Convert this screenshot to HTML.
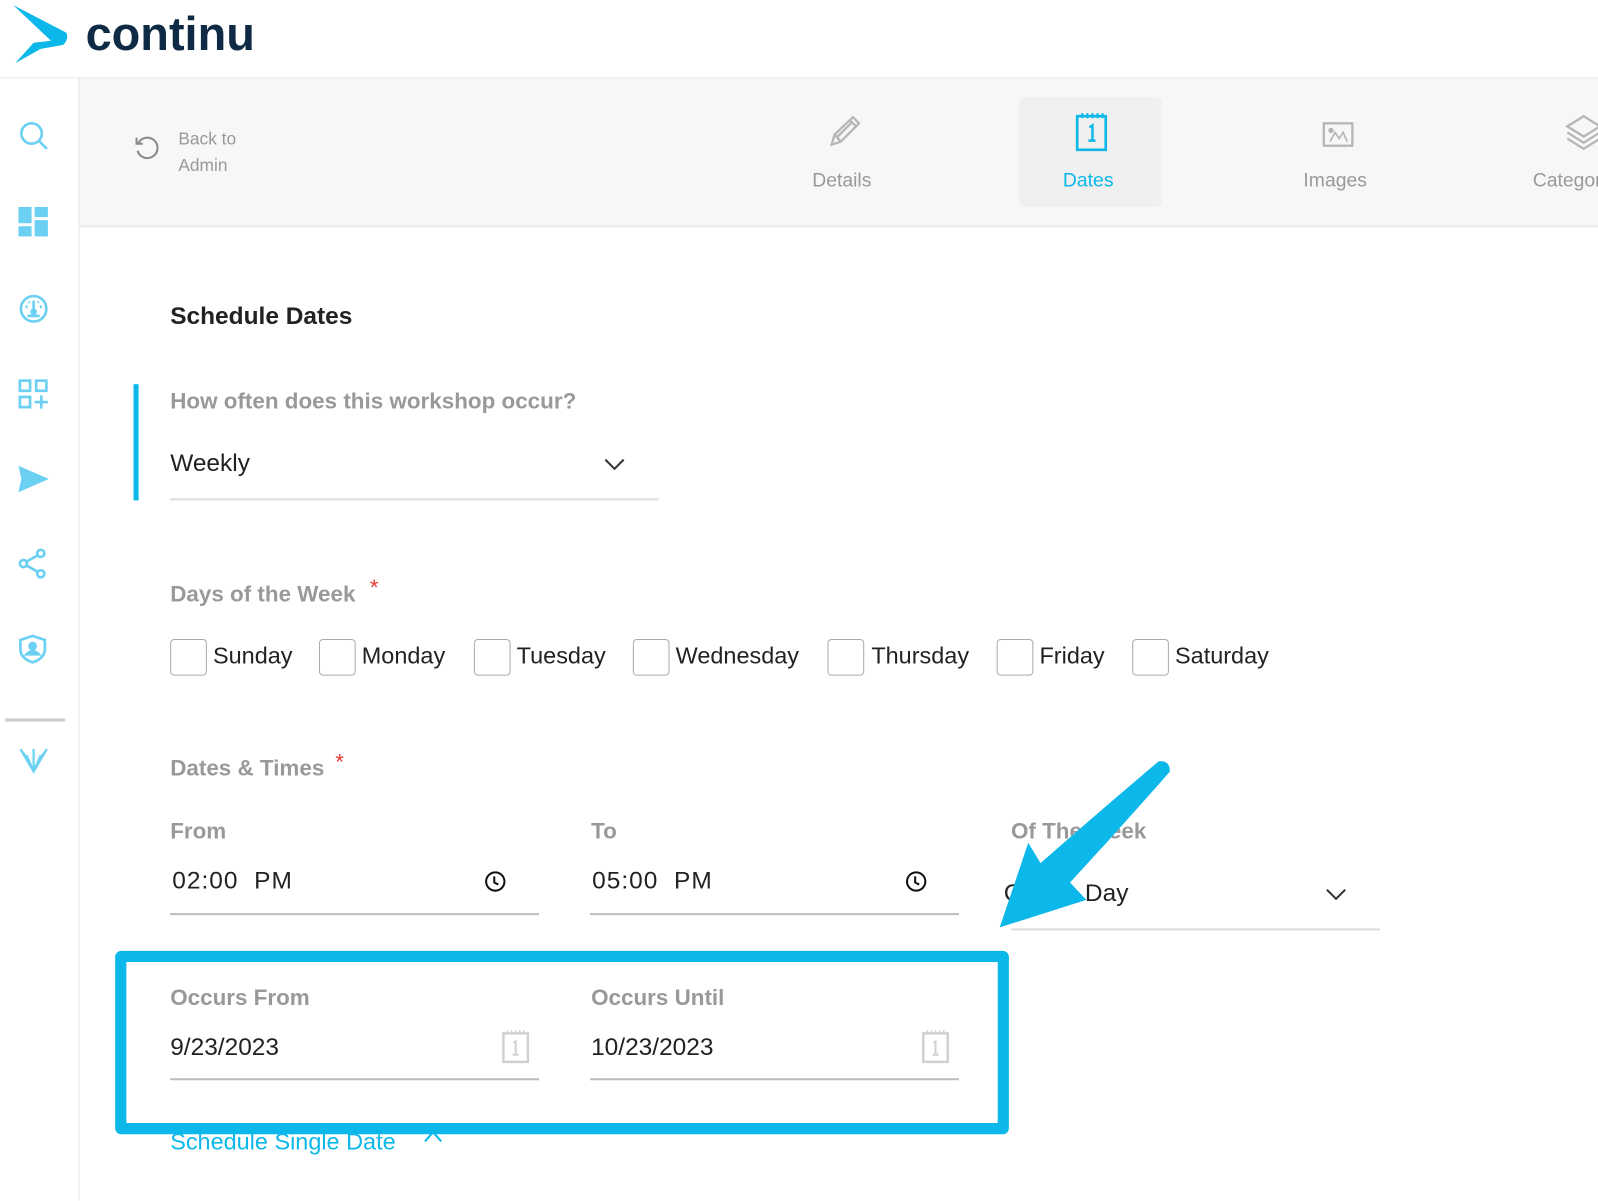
<!DOCTYPE html>
<html><head><meta charset="utf-8">
<style>
html,body{margin:0;padding:0;width:1598px;height:1200px;overflow:hidden;background:#fff;}
#w{position:absolute;left:0;top:0;width:1568px;height:1178px;transform:scale(1.0191);transform-origin:0 0;font-family:"Liberation Sans",sans-serif;}
.a{position:absolute;white-space:nowrap;}
.lbl{color:#999;font-size:22px;font-weight:bold;}
.val{color:#222;font-size:24px;}
.ul{position:absolute;height:2px;background:#bdbdbd;}
.cb{position:absolute;width:34px;height:34px;border:1.5px solid #aaa;border-radius:4px;top:627px;}
.cl{position:absolute;top:630px;font-size:23px;color:#222;}
.ic{position:absolute;}
</style></head><body><div id="w">
<div class="a" style="left:0;top:0;width:1568px;height:76px;border-bottom:1px solid #e8e8e8;background:#fff"></div>
<svg class="ic" style="left:10px;top:4px" width="60" height="60" viewBox="0 0 60 60"><path d="M3 1 L55 28 Q58 34 52 40 L30 44 L5 58 L23 38 L40 36 Z" fill="#0cb8ea"/></svg>
<div class="a" style="left:84px;top:6px;font-size:46px;font-weight:bold;color:#0f2a45;">continu</div>
<div class="a" style="left:0;top:77px;width:77px;height:1101px;background:#fff;border-right:1px solid #e6e6e6"></div>
<svg class="ic" style="left:18px;top:118px" width="30" height="30" viewBox="0 0 30 30" fill="none" stroke="#6cd0f3" stroke-width="2.6"><circle cx="13" cy="13" r="10"/><path d="M20 20 L28 28"/></svg>
<svg class="ic" style="left:18px;top:203px" width="30" height="30" viewBox="0 0 30 30" fill="#6cd0f3"><rect x="0" y="0" width="13" height="16"/><rect x="16" y="0" width="13" height="10"/><rect x="0" y="19" width="13" height="10"/><rect x="16" y="13" width="13" height="16"/></svg>
<svg class="ic" style="left:18px;top:288px" width="30" height="30" viewBox="0 0 30 30" fill="none" stroke="#6cd0f3" stroke-width="2.6"><circle cx="15" cy="15" r="12.5"/><path d="M15 7V17M9 22h12M7 13h2M21 13h2M10 8l1 1M20 8l-1 1"/><circle cx="15" cy="18" r="2" fill="#6cd0f3"/></svg>
<svg class="ic" style="left:18px;top:372px" width="30" height="30" viewBox="0 0 30 30" fill="none" stroke="#6cd0f3" stroke-width="2.6"><rect x="1.5" y="1.5" width="10" height="10"/><rect x="17.5" y="1.5" width="10" height="10"/><rect x="1.5" y="17.5" width="10" height="10"/><path d="M22.5 16v13M16 22.5h13"/></svg>
<svg class="ic" style="left:18px;top:457px" width="30" height="26" viewBox="0 0 30 26" fill="#6cd0f3"><path d="M0 0 L30 13 L0 26 L3 13 Z"/></svg>
<svg class="ic" style="left:18px;top:538px" width="30" height="30" viewBox="0 0 30 30" fill="none" stroke="#6cd0f3" stroke-width="2.6"><circle cx="22" cy="5" r="3.5"/><circle cx="5" cy="15" r="3.5"/><circle cx="22" cy="25" r="3.5"/><path d="M8 13L19 7M8 17L19 23"/></svg>
<svg class="ic" style="left:18px;top:622px" width="30" height="30" viewBox="0 0 30 30" fill="none" stroke="#6cd0f3" stroke-width="2.6"><path d="M14 2 L26 6 V15 Q26 24 14 28 Q2 24 2 15 V6 Z"/><circle cx="14" cy="12" r="3" fill="#6cd0f3"/><path d="M8 20 Q14 14 20 20 Z" fill="#6cd0f3"/></svg>
<div class="a" style="left:5px;top:705px;width:59px;height:3px;background:#ccc"></div>
<svg class="ic" style="left:18px;top:731px" width="30" height="28" viewBox="0 0 30 28" fill="none" stroke="#6cd0f3" stroke-width="2.2"><path d="M2 4 L15 26 L28 4 M8 10 L15 26 L22 10 M15 4 L15 26 M2 4 Q10 14 15 26 Q20 14 28 4"/></svg>
<div class="a" style="left:78px;top:77px;width:1490px;height:144px;background:#f7f7f7;border-bottom:2px solid #ececec"></div>
<svg class="ic" style="left:131px;top:132px" width="26" height="26" viewBox="0 0 26 26" fill="none" stroke="#888" stroke-width="2"><path d="M5 8 A10 10 0 1 1 4 16"/><path d="M3 3 V9 H9"/></svg>
<div class="a" style="left:175px;top:124px;font-size:17px;color:#999;line-height:26px">Back to<br>Admin</div>
<svg class="ic" style="left:812px;top:112px" width="34" height="34" viewBox="0 0 34 34" fill="none" stroke="#b5b5b5" stroke-width="2.2"><path d="M4 30 L7 20 L25 3 L31 9 L13 27 Z M7 20 L13 27 M22 6 L28 12 M10 22 L24 8"/></svg>
<div class="a" style="left:797px;top:167px;font-size:19px;color:#999">Details</div>
<div class="a" style="left:1000px;top:95px;width:140px;height:108px;background:#f0f0f0;border-radius:6px"></div>
<svg class="ic" style="left:1054px;top:110px" width="34" height="40" viewBox="0 0 34 40" fill="none" stroke="#0cb8ea" stroke-width="2.6"><rect x="3" y="4" width="28" height="33"/><path d="M8 1v5M13 1v5M18 1v5M23 1v5M28 1v5" stroke-width="2"/><path d="M15 15 L18 13 V28 M14 28 H21" stroke-width="2.4"/></svg>
<div class="a" style="left:1043px;top:167px;font-size:19px;color:#0cb8ea">Dates</div>
<svg class="ic" style="left:1297px;top:119px" width="32" height="26" viewBox="0 0 32 26" fill="none" stroke="#b5b5b5" stroke-width="2.2"><rect x="2" y="2" width="28" height="22"/><path d="M8 20 L13 11 L17 17 L21 11 L25 20" stroke-width="1.6"/><circle cx="9" cy="9" r="1.5" fill="#b5b5b5"/></svg>
<div class="a" style="left:1279px;top:167px;font-size:19px;color:#999">Images</div>
<svg class="ic" style="left:1536px;top:112px" width="40" height="36" viewBox="0 0 40 36" fill="none" stroke="#b5b5b5" stroke-width="2.2"><path d="M2 12 L18 2 L34 12 L18 22 Z M2 18 L18 28 L34 18 M2 24 L18 34 L34 24"/></svg>
<div class="a" style="left:1504px;top:167px;font-size:19px;color:#999">Categories</div>
<div class="a" style="left:167px;top:297px;font-size:24px;font-weight:bold;color:#222">Schedule Dates</div>
<div class="a" style="left:131px;top:377px;width:5px;height:114px;background:#0cb8ea"></div>
<div class="a lbl" style="left:167px;top:381px">How often does this workshop occur?</div>
<div class="a val" style="left:167px;top:441px">Weekly</div>
<svg class="ic" style="left:592px;top:449px" width="22" height="14" viewBox="0 0 22 14" fill="none" stroke="#333" stroke-width="2"><path d="M2 2 L11 11 L20 2"/></svg>
<div class="ul" style="left:167px;top:489px;width:479px;background:#ddd"></div>
<div class="a lbl" style="left:167px;top:570px">Days of the Week</div>
<div class="a" style="left:363px;top:564px;color:#e53935;font-size:22px">*</div>
<div class="cb" style="left:167px"></div><div class="cl" style="left:209px">Sunday</div>
<div class="cb" style="left:313px"></div><div class="cl" style="left:355px">Monday</div>
<div class="cb" style="left:465px"></div><div class="cl" style="left:507px">Tuesday</div>
<div class="cb" style="left:621px"></div><div class="cl" style="left:663px">Wednesday</div>
<div class="cb" style="left:812px"></div><div class="cl" style="left:855px">Thursday</div>
<div class="cb" style="left:978px"></div><div class="cl" style="left:1020px">Friday</div>
<div class="cb" style="left:1111px"></div><div class="cl" style="left:1153px">Saturday</div>
<div class="a lbl" style="left:167px;top:741px">Dates &amp; Times</div>
<div class="a" style="left:329px;top:735px;color:#e53935;font-size:22px">*</div>
<div class="a lbl" style="left:167px;top:803px">From</div>
<div class="a lbl" style="left:580px;top:803px">To</div>
<div class="a lbl" style="left:992px;top:803px">Of The Week</div>
<div class="a val" style="left:169px;top:851px;letter-spacing:1px">02:00&nbsp; PM</div>
<div class="a val" style="left:581px;top:851px;letter-spacing:1px">05:00&nbsp; PM</div>
<svg class="ic" style="left:475px;top:854px" width="22" height="22" viewBox="0 0 22 22" fill="none" stroke="#111" stroke-width="2"><circle cx="11" cy="11" r="9"/><path d="M10 6V12L14 14"/></svg>
<svg class="ic" style="left:888px;top:854px" width="22" height="22" viewBox="0 0 22 22" fill="none" stroke="#111" stroke-width="2"><circle cx="11" cy="11" r="9"/><path d="M10 6V12L14 14"/></svg>
<div class="ul" style="left:167px;top:896px;width:362px"></div>
<div class="ul" style="left:579px;top:896px;width:362px"></div>
<div class="a val" style="left:985px;top:863px">Of The Day</div>
<svg class="ic" style="left:1300px;top:871px" width="22" height="14" viewBox="0 0 22 14" fill="none" stroke="#333" stroke-width="2"><path d="M2 2 L11 11 L20 2"/></svg>
<div class="ul" style="left:992px;top:911px;width:362px;background:#ddd"></div>
<div class="a lbl" style="left:167px;top:966px">Occurs From</div>
<div class="a lbl" style="left:580px;top:966px">Occurs Until</div>
<div class="a val" style="left:167px;top:1014px">9/23/2023</div>
<div class="a val" style="left:580px;top:1014px">10/23/2023</div>
<svg class="ic" style="left:492px;top:1010px" width="28" height="34" viewBox="0 0 28 34" fill="none" stroke="#d0d0d0" stroke-width="2.4"><rect x="2" y="4" width="24" height="28"/><path d="M6 1v4M10 1v4M14 1v4M18 1v4M22 1v4" stroke-width="1.6"/><path d="M12 13L14 12V25M11 25H17" stroke-width="2"/></svg>
<svg class="ic" style="left:904px;top:1010px" width="28" height="34" viewBox="0 0 28 34" fill="none" stroke="#d0d0d0" stroke-width="2.4"><rect x="2" y="4" width="24" height="28"/><path d="M6 1v4M10 1v4M14 1v4M18 1v4M22 1v4" stroke-width="1.6"/><path d="M12 13L14 12V25M11 25H17" stroke-width="2"/></svg>
<div class="ul" style="left:167px;top:1058px;width:362px"></div>
<div class="ul" style="left:579px;top:1058px;width:362px"></div>
<div class="a" style="left:167px;top:1107px;font-size:23px;color:#0cb8ea">Schedule Single Date</div>
<svg class="ic" style="left:414px;top:1108px" width="22" height="14" viewBox="0 0 22 14" fill="none" stroke="#0cb8ea" stroke-width="2"><path d="M3 12 L11 3 L19 12"/></svg>
<div class="a" style="left:113px;top:933px;width:855px;height:158px;border:11px solid #0cb8ea;border-radius:6px"></div>
<svg class="ic" style="left:0;top:0" width="1568" height="1178" viewBox="0 0 1568 1178"><path d="M1137 747 Q1080 795 1021 847 L1009 827 L981 910 L1066 883 L1050 866 Q1100 812 1148 757 Q1148 746 1137 747 Z" fill="#0cb8ea"/></svg>
</div></body></html>
